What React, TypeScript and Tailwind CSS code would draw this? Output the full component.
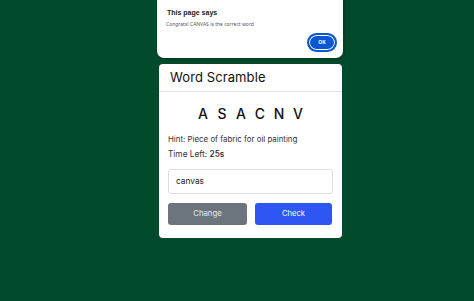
import React from "react";

export default function App() {
  const letters = ["A", "S", "A", "C", "N", "V"];
  return (
    <div
      className="relative w-[474px] h-[301px] bg-[#014a2b] overflow-hidden"
      style={{ fontFamily: "Inter, 'Noto Sans', sans-serif" }}
    >
      {/* Card */}
      <div className="absolute left-[159px] top-[64px] w-[183px] h-[174px] bg-white rounded-[4px] flex flex-col">
        <div className="h-[28px] flex items-center px-[11px] border-b border-[#e3e6e4]">
          <span className="text-[13px] text-[#111] tracking-[0.1px]">Word Scramble</span>
        </div>
        <div className="flex flex-col px-[9px]">
          <div className="h-[40px] flex items-center justify-center gap-[8.5px] pt-[2px]">
            {letters.map((l, i) => (
              <span key={i} className="text-[14px] font-medium text-[#111] w-[10.5px] text-center">
                {l}
              </span>
            ))}
          </div>
          <div className="text-[7.9px] text-[#333] leading-[14px]">Hint: Piece of fabric for oil painting</div>
          <div className="text-[8.3px] text-[#333] leading-[14px] mt-[1px]">
            Time Left: <span className="font-medium text-[#222]">25s</span>
          </div>
          <div className="mt-[8px] h-[25px] border border-[#dcdfe2] rounded-[3px] flex items-center px-[7px]">
            <span className="text-[8.3px] text-[#222]">canvas</span>
          </div>
          <div className="mt-[9px] flex gap-[8px]">
            <div className="w-[79px] h-[22px] rounded-[3px] bg-[#6c757d] flex items-center justify-center text-[7.8px] text-[#e8e8ee]">
              Change
            </div>
            <div className="w-[77px] h-[22px] rounded-[3px] bg-[#2d56f2] flex items-center justify-center text-[7.6px] text-white">
              Check
            </div>
          </div>
        </div>
      </div>

      {/* Alert dialog */}
      <div className="absolute left-[157px] top-[-10px] w-[186px] h-[68px] bg-white rounded-[7px] shadow-[0_1px_3px_rgba(0,0,0,0.3)]">
        <div className="absolute left-[10px] top-[18px] text-[7px] font-semibold text-[#222]" style={{ fontFamily: "'Liberation Sans', Arial, sans-serif" }}>
          This page says
        </div>
        <div className="absolute left-[9px] top-[31px] text-[5px] text-[#555]" style={{ fontFamily: "'Noto Sans', sans-serif" }}>
          Congrats! CANVAS is the correct word
        </div>
        <div className="absolute left-[150px] top-[43px] w-[30px] h-[19px] rounded-full bg-[#0b57d0] border-[2px] border-[#0b57d0] ring-[1px] ring-inset ring-white flex items-center justify-center">
          <span className="text-[5px] font-bold text-white" style={{ fontFamily: "'Noto Sans', sans-serif" }}>OK</span>
        </div>
      </div>
    </div>
  );
}
